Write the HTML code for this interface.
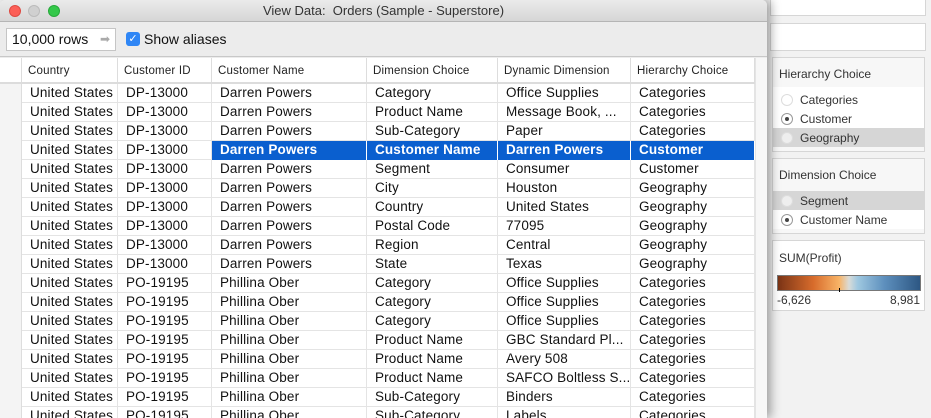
<!DOCTYPE html>
<html><head><style>
*{box-sizing:border-box;margin:0;padding:0}
body{width:931px;height:418px;overflow:hidden;background:#f0f0f0;font-family:"Liberation Sans",Arial,sans-serif;position:relative}
.bg{position:absolute;left:760px;top:0;width:171px;height:418px;background:#f2f2f2}
.box{position:absolute;background:#fff;border:1px solid #d6d6d6}
.win{position:absolute;left:0;top:0;width:767px;height:418px;background:#ececec;box-shadow:4px 0 10px rgba(0,0,0,.35);border-radius:5px 5px 0 0;overflow:hidden}
.title{height:22px;background:linear-gradient(#ebebeb,#d6d6d6);border-bottom:1px solid #b5b5b5;text-align:center;font-size:13px;line-height:22px;color:#333}
.dot{position:absolute;top:5px;width:12px;height:12px;border-radius:50%}
.tb{height:35px;position:relative;border-bottom:1px solid #c8c8c8}
.grid{position:absolute;top:58px;left:0;width:767px;height:360px;background:#fff}
.hdr{position:absolute;top:0;left:0;height:26px;width:755px;background:#fff;border-bottom:2px solid #dcdcdc;font-size:11.5px;color:#222;letter-spacing:.2px}
.hc{position:absolute;top:0;height:24px;line-height:26px;padding-left:6px;border-right:1px solid #ddd}
.row{position:absolute;left:0;height:19px;width:755px;border-bottom:1px solid #e4e4e4;font-size:13.5px;color:#111;letter-spacing:.15px}
.c{position:absolute;top:0;height:19px;line-height:18px;padding-left:8px;border-right:1px solid #e4e4e4;white-space:nowrap;overflow:hidden}
.rh{position:absolute;left:0;top:0;width:22px;height:19px;background:#f4f4f4;border-right:1px solid #ddd}
.sel .c.s{background:#0a5fcf;color:#fff;font-weight:bold;border-right-color:#fff}
.lbl{font-size:12px;color:#333;position:absolute}
.radio{position:absolute;width:12px;height:12px;border-radius:50%;border:1px solid #bbb;background:#fff}
</style></head><body>
<div class="bg"></div>
<div class="box" style="left:770px;top:-2px;width:156px;height:18px"></div>
<div class="box" style="left:770px;top:23px;width:156px;height:28px"></div>
<div class="box" style="left:772px;top:57px;width:153px;height:95px;background:#f7f7f7">
 <div class="lbl" style="left:6px;top:9px">Hierarchy Choice</div>
 <div style="position:absolute;left:0;top:29px;width:151px;height:57px;background:#fff"></div>
 <div style="position:absolute;left:0;top:70px;width:151px;height:19px;background:#d6d6d6"></div>
 <div class="radio" style="left:8px;top:36px;border-color:#ddd"></div><div class="lbl" style="left:27px;top:35px">Categories</div>
 <div class="radio" style="left:8px;top:55px;border-color:#999"><div style="width:4px;height:4px;border-radius:50%;background:#444;margin:3px"></div></div><div class="lbl" style="left:27px;top:54px">Customer</div>
 <div class="radio" style="left:8px;top:74px;border-color:#ddd;background:#eee"></div><div class="lbl" style="left:27px;top:73px">Geography</div>
</div>
<div class="box" style="left:772px;top:158px;width:153px;height:76px;background:#f7f7f7">
 <div class="lbl" style="left:6px;top:9px">Dimension Choice</div>
 <div style="position:absolute;left:0;top:32px;width:151px;height:19px;background:#d6d6d6"></div>
 <div style="position:absolute;left:0;top:51px;width:151px;height:19px;background:#fff"></div>
 <div class="radio" style="left:8px;top:36px;border-color:#ddd;background:#eee"></div><div class="lbl" style="left:27px;top:35px">Segment</div>
 <div class="radio" style="left:8px;top:55px;border-color:#999"><div style="width:4px;height:4px;border-radius:50%;background:#444;margin:3px"></div></div><div class="lbl" style="left:27px;top:54px">Customer Name</div>
</div>
<div class="box" style="left:772px;top:240px;width:153px;height:71px;background:#fff">
 <div class="lbl" style="left:6px;top:10px">SUM(Profit)</div>
 <div style="position:absolute;left:4px;top:34px;width:144px;height:16px;border:1px solid #777;background:linear-gradient(90deg,#7b3416,#d86c2c 25%,#f8b366 43%,#d9dbd8 50%,#9fc8e0 56%,#5d8fbd 75%,#2d5783)"></div>
 <div style="position:absolute;left:66px;top:47px;width:1px;height:4px;background:#000"></div>
 <div class="lbl" style="left:4px;top:52px">-6,626</div>
 <div class="lbl" style="right:4px;top:52px">8,981</div>
</div>
<div class="win">
 <div class="title">View Data:&nbsp; Orders (Sample - Superstore)</div>
 <div class="dot" style="left:9px;background:#fc5f57;border:1px solid #de4a42"></div>
 <div class="dot" style="left:28px;background:#d0d0d0;border:1px solid #bbb"></div>
 <div class="dot" style="left:48px;background:#34c84a;border:1px solid #27a93a"></div>
 <div class="tb">
  <div style="position:absolute;left:6px;top:6px;width:110px;height:23px;background:#fff;border:1px solid #c5c5c5;font-size:14px;line-height:21px;padding-left:5px;color:#111">10,000 rows<span style="position:absolute;right:5px;color:#aaa;font-size:12px">➡</span></div>
  <div style="position:absolute;left:126px;top:10px;width:14px;height:14px;border-radius:3px;background:#2f86f5;color:#fff;font-size:11px;line-height:14px;text-align:center">✓</div>
  <div style="position:absolute;left:144px;top:9px;font-size:14px;color:#111">Show aliases</div>
 </div>
 <div class="grid" id="g">
  <div class="hdr">
   <div class="hc" style="left:0;width:22px"></div>
   <div class="hc" style="left:22px;width:96px">Country</div>
   <div class="hc" style="left:118px;width:94px">Customer ID</div>
   <div class="hc" style="left:212px;width:155px">Customer Name</div>
   <div class="hc" style="left:367px;width:131px">Dimension Choice</div>
   <div class="hc" style="left:498px;width:133px">Dynamic Dimension</div>
   <div class="hc" style="left:631px;width:124px">Hierarchy Choice</div>
  </div>
 </div>
 <div style="position:absolute;left:755px;top:58px;width:12px;height:360px;background:#f7f7f7;border-left:1px solid #e4e4e4"></div>
</div>
<script>
var d=[["DP-13000","Darren Powers","Category","Office Supplies","Categories"],
["DP-13000","Darren Powers","Product Name","Message Book, ...","Categories"],
["DP-13000","Darren Powers","Sub-Category","Paper","Categories"],
["DP-13000","Darren Powers","Customer Name","Darren Powers","Customer"],
["DP-13000","Darren Powers","Segment","Consumer","Customer"],
["DP-13000","Darren Powers","City","Houston","Geography"],
["DP-13000","Darren Powers","Country","United States","Geography"],
["DP-13000","Darren Powers","Postal Code","77095","Geography"],
["DP-13000","Darren Powers","Region","Central","Geography"],
["DP-13000","Darren Powers","State","Texas","Geography"],
["PO-19195","Phillina Ober","Category","Office Supplies","Categories"],
["PO-19195","Phillina Ober","Category","Office Supplies","Categories"],
["PO-19195","Phillina Ober","Category","Office Supplies","Categories"],
["PO-19195","Phillina Ober","Product Name","GBC Standard Pl...","Categories"],
["PO-19195","Phillina Ober","Product Name","Avery 508","Categories"],
["PO-19195","Phillina Ober","Product Name","SAFCO Boltless S...","Categories"],
["PO-19195","Phillina Ober","Sub-Category","Binders","Categories"],
["PO-19195","Phillina Ober","Sub-Category","Labels","Categories"]];
var L=[[22,96],[118,94],[212,155],[367,131],[498,133],[631,124]],h='';
d.forEach(function(r,i){var v=["United States"].concat(r);
h+='<div class="row'+(i==3?' sel':'')+'" style="top:'+(26+i*19)+'px"><div class="rh"></div>';
v.forEach(function(t,j){h+='<div class="c'+(j>=2?' s':'')+'" style="left:'+L[j][0]+'px;width:'+L[j][1]+'px">'+t+'</div>'});h+='</div>'});
document.getElementById('g').insertAdjacentHTML('beforeend',h);
</script>
</body></html>
